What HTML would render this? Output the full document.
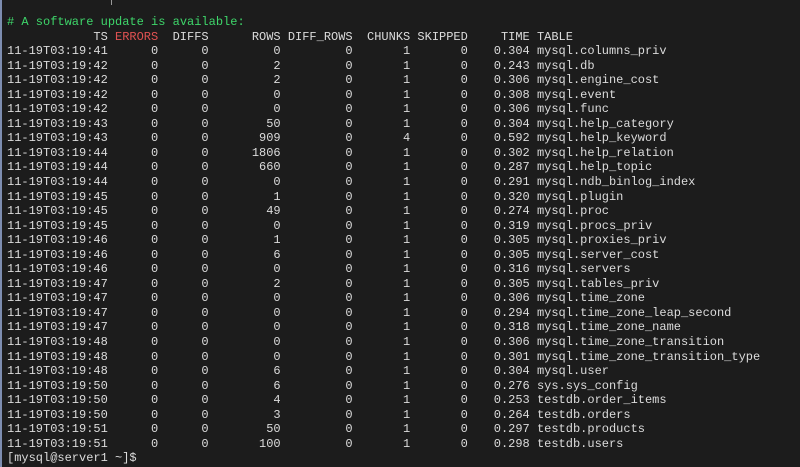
<!DOCTYPE html>
<html><head><meta charset="utf-8"><style>
html,body{margin:0;padding:0;width:800px;height:467px;overflow:hidden;background:#1c1c1c;}
.bar{position:absolute;left:0;top:0;width:2px;height:467px;background:#7d8db0;}
.t{position:absolute;left:7px;top:15px;font-family:"Liberation Mono",monospace;font-size:12px;line-height:14.55px;color:#dcdcdc;}
.t div{white-space:nowrap;}
.g{display:grid;grid-template-columns:14ch 7ch 7ch 10ch 10ch 8ch 8ch 8.6ch auto;}
.g span{text-align:right;white-space:pre;}
.g span:nth-child(9n){text-align:left;padding-left:1ch;}
.green{color:#3ed66a;}
.red{color:#e05252;}
.top{position:absolute;left:111px;top:0;width:1px;height:5px;background:#999;}
</style></head><body>
<div class="bar"></div>
<div class="top"></div>
<div class="t"><div class="green"># A software update is available:</div><div class="g"><span>TS</span><span class="red">ERRORS</span><span>DIFFS</span><span>ROWS</span><span>DIFF_ROWS</span><span>CHUNKS</span><span>SKIPPED</span><span>TIME</span><span>TABLE</span>
<span>11-19T03:19:41</span><span>0</span><span>0</span><span>0</span><span>0</span><span>1</span><span>0</span><span>0.304</span><span>mysql.columns_priv</span>
<span>11-19T03:19:42</span><span>0</span><span>0</span><span>2</span><span>0</span><span>1</span><span>0</span><span>0.243</span><span>mysql.db</span>
<span>11-19T03:19:42</span><span>0</span><span>0</span><span>2</span><span>0</span><span>1</span><span>0</span><span>0.306</span><span>mysql.engine_cost</span>
<span>11-19T03:19:42</span><span>0</span><span>0</span><span>0</span><span>0</span><span>1</span><span>0</span><span>0.308</span><span>mysql.event</span>
<span>11-19T03:19:42</span><span>0</span><span>0</span><span>0</span><span>0</span><span>1</span><span>0</span><span>0.306</span><span>mysql.func</span>
<span>11-19T03:19:43</span><span>0</span><span>0</span><span>50</span><span>0</span><span>1</span><span>0</span><span>0.304</span><span>mysql.help_category</span>
<span>11-19T03:19:43</span><span>0</span><span>0</span><span>909</span><span>0</span><span>4</span><span>0</span><span>0.592</span><span>mysql.help_keyword</span>
<span>11-19T03:19:44</span><span>0</span><span>0</span><span>1806</span><span>0</span><span>1</span><span>0</span><span>0.302</span><span>mysql.help_relation</span>
<span>11-19T03:19:44</span><span>0</span><span>0</span><span>660</span><span>0</span><span>1</span><span>0</span><span>0.287</span><span>mysql.help_topic</span>
<span>11-19T03:19:44</span><span>0</span><span>0</span><span>0</span><span>0</span><span>1</span><span>0</span><span>0.291</span><span>mysql.ndb_binlog_index</span>
<span>11-19T03:19:45</span><span>0</span><span>0</span><span>1</span><span>0</span><span>1</span><span>0</span><span>0.320</span><span>mysql.plugin</span>
<span>11-19T03:19:45</span><span>0</span><span>0</span><span>49</span><span>0</span><span>1</span><span>0</span><span>0.274</span><span>mysql.proc</span>
<span>11-19T03:19:45</span><span>0</span><span>0</span><span>0</span><span>0</span><span>1</span><span>0</span><span>0.319</span><span>mysql.procs_priv</span>
<span>11-19T03:19:46</span><span>0</span><span>0</span><span>1</span><span>0</span><span>1</span><span>0</span><span>0.305</span><span>mysql.proxies_priv</span>
<span>11-19T03:19:46</span><span>0</span><span>0</span><span>6</span><span>0</span><span>1</span><span>0</span><span>0.305</span><span>mysql.server_cost</span>
<span>11-19T03:19:46</span><span>0</span><span>0</span><span>0</span><span>0</span><span>1</span><span>0</span><span>0.316</span><span>mysql.servers</span>
<span>11-19T03:19:47</span><span>0</span><span>0</span><span>2</span><span>0</span><span>1</span><span>0</span><span>0.305</span><span>mysql.tables_priv</span>
<span>11-19T03:19:47</span><span>0</span><span>0</span><span>0</span><span>0</span><span>1</span><span>0</span><span>0.306</span><span>mysql.time_zone</span>
<span>11-19T03:19:47</span><span>0</span><span>0</span><span>0</span><span>0</span><span>1</span><span>0</span><span>0.294</span><span>mysql.time_zone_leap_second</span>
<span>11-19T03:19:47</span><span>0</span><span>0</span><span>0</span><span>0</span><span>1</span><span>0</span><span>0.318</span><span>mysql.time_zone_name</span>
<span>11-19T03:19:48</span><span>0</span><span>0</span><span>0</span><span>0</span><span>1</span><span>0</span><span>0.306</span><span>mysql.time_zone_transition</span>
<span>11-19T03:19:48</span><span>0</span><span>0</span><span>0</span><span>0</span><span>1</span><span>0</span><span>0.301</span><span>mysql.time_zone_transition_type</span>
<span>11-19T03:19:48</span><span>0</span><span>0</span><span>6</span><span>0</span><span>1</span><span>0</span><span>0.304</span><span>mysql.user</span>
<span>11-19T03:19:50</span><span>0</span><span>0</span><span>6</span><span>0</span><span>1</span><span>0</span><span>0.276</span><span>sys.sys_config</span>
<span>11-19T03:19:50</span><span>0</span><span>0</span><span>4</span><span>0</span><span>1</span><span>0</span><span>0.253</span><span>testdb.order_items</span>
<span>11-19T03:19:50</span><span>0</span><span>0</span><span>3</span><span>0</span><span>1</span><span>0</span><span>0.264</span><span>testdb.orders</span>
<span>11-19T03:19:51</span><span>0</span><span>0</span><span>50</span><span>0</span><span>1</span><span>0</span><span>0.297</span><span>testdb.products</span>
<span>11-19T03:19:51</span><span>0</span><span>0</span><span>100</span><span>0</span><span>1</span><span>0</span><span>0.298</span><span>testdb.users</span>
</div><div>[mysql@server1 ~]$</div></div>
</body></html>
